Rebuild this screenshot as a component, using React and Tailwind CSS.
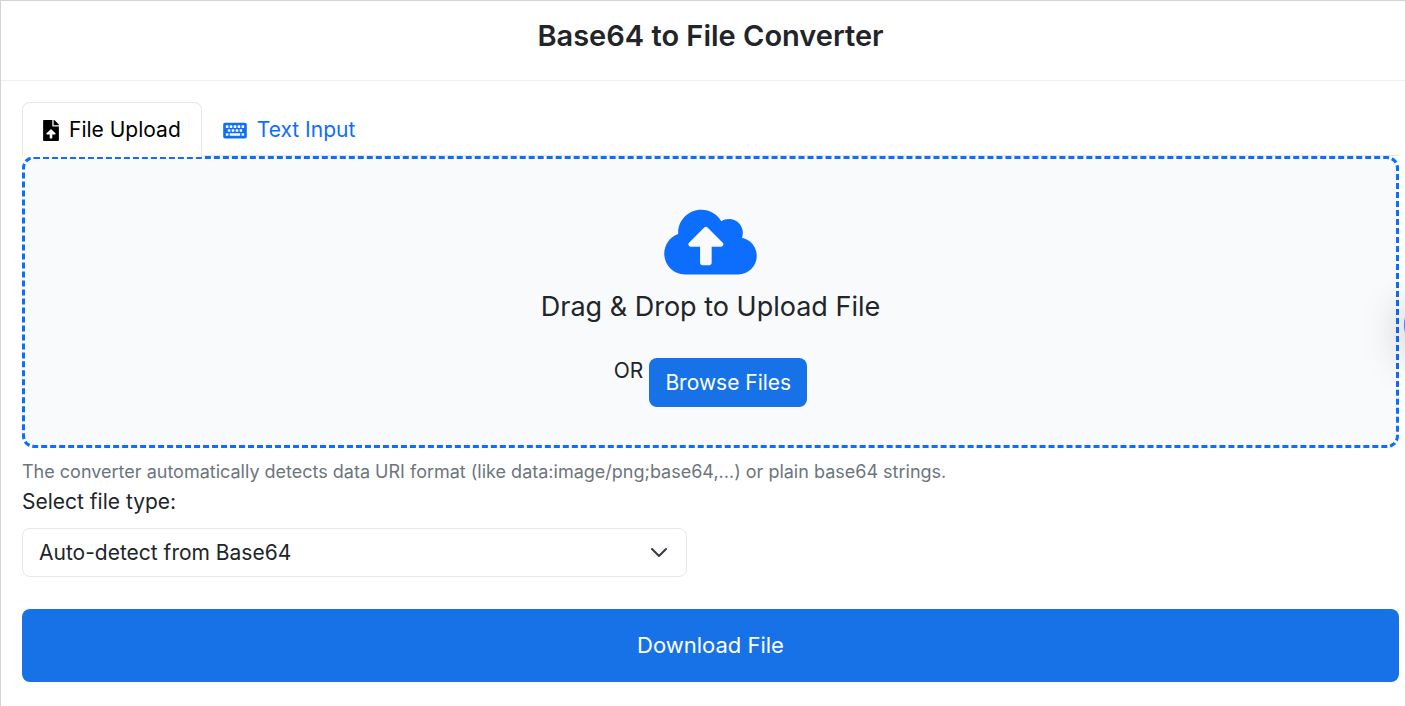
import { useState } from "react";
import { FaCloudUploadAlt, FaFileUpload, FaKeyboard } from "react-icons/fa";

const tabs = [
  { id: "file", label: "File Upload", icon: FaFileUpload, iconClass: "h-[21px] w-4" },
  { id: "text", label: "Text Input", icon: FaKeyboard, iconClass: "h-[21px] w-6" },
];

function Tabs({ active, onChange }) {
  return (
    <div role="tablist" className="flex border-b border-[#e8e8e8]">
      {tabs.map(({ id, label, icon: Icon, iconClass }) => (
        <button
          key={id}
          type="button"
          role="tab"
          aria-selected={active === id}
          onClick={() => onChange(id)}
          className={`-mb-0.5 flex items-center gap-2.5 rounded-t-lg border border-b-0 px-5 py-[13px] leading-7 ${
            active === id
              ? "relative z-10 border-[#e8e8e8] bg-white text-black"
              : "border-transparent text-[#0d6efd]"
          }`}
        >
          <Icon className={iconClass} />
          {label}
        </button>
      ))}
    </div>
  );
}

function DropZone() {
  return (
    <div className="flex flex-col items-center rounded-xl border-3 border-dashed border-[#0d6efd] bg-[#f8fafc] pt-[46px] pb-[38px]">
      <FaCloudUploadAlt className="h-[74px] w-[93px] text-[#0d6efd]" />
      <p className="mt-2.5 text-[27px] leading-9">Drag &amp; Drop to Upload File</p>
      <div className="mt-[33px] flex items-start gap-1.5">
        <span className="leading-[26px]">OR</span>
        <button
          type="button"
          className="rounded-lg bg-[#1772e8] px-4 py-2.5 leading-[29px] text-white"
        >
          Browse Files
        </button>
      </div>
    </div>
  );
}

function FileTypeSelect() {
  return (
    <div>
      <label htmlFor="file-type" className="block leading-7">
        Select file type:
      </label>
      <div className="relative mt-3 w-[48.3%]">
        <select
          id="file-type"
          className="block h-[49px] w-full appearance-none rounded-lg border border-[#e8e8e8] bg-white pr-12 pl-4"
        >
          <option>Auto-detect from Base64</option>
        </select>
        <svg
          viewBox="0 0 16 16"
          className="pointer-events-none absolute top-4 right-5 h-4 w-4"
          fill="none"
          stroke="#343a40"
          strokeWidth="2"
          strokeLinecap="round"
          strokeLinejoin="round"
        >
          <path d="m1 5 7 7 7-7" />
        </svg>
      </div>
    </div>
  );
}

export default function App() {
  const [active, setActive] = useState("file");

  return (
    <main className="relative min-h-screen overflow-hidden border-t border-l border-[#d3d3d3] bg-white font-['Inter',sans-serif] text-[21px] text-[#212529]">
      <header className="border-b border-[#efefef] pt-[15px] pr-1.5 pb-6 pl-[21px]">
        <h1 className="text-center text-[29px] leading-10 font-semibold">
          Base64 to File Converter
        </h1>
      </header>

      <div className="pt-[21px] pr-1.5 pb-6 pl-[21px]">
        <Tabs active={active} onChange={setActive} />
        <DropZone />
        <p className="mt-2.5 mb-0.5 text-[18px] leading-7 text-[#6c757d]">
          The converter automatically detects data URI format (like
          data:image/png;base64,...) or plain base64 strings.
        </p>
        <FileTypeSelect />
        <button
          type="button"
          className="mt-8 w-full rounded-lg bg-[#1772e8] py-[22px] text-[22px] leading-[29px] text-white"
        >
          Download File
        </button>
      </div>

      <button
        type="button"
        aria-label="Open assistant"
        className="absolute top-[294px] -right-[59px] h-15 w-15 rounded-full bg-[#5b6cf0] shadow-[0_6px_44px_rgba(0,0,0,0.28)]"
      />
    </main>
  );
}
